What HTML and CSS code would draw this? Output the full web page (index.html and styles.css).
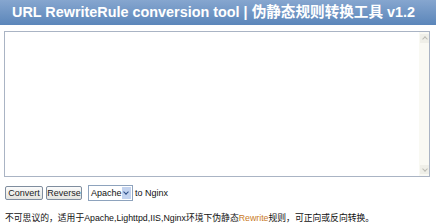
FILE: index.html
```html
<!DOCTYPE html>
<html lang="zh-CN">

<head>
    <meta charset="UTF-8">
    <title>URL RewriteRule conversion tool</title>
    <link rel="stylesheet" href="styles.css">
</head>

<body>
    <header class="top">URL RewriteRule conversion tool | <span class="cn">伪静态规则转换工具</span> v1.2</header>
    <section class="main">
        <div class="editor">
            <textarea class="code"></textarea>
            <div class="scroll">
                <span class="arrow up"></span>
                <span class="arrow down"></span>
            </div>
        </div>
        <div class="tools">
            <button class="btn convert">Convert</button>
            <button class="btn reverse">Reverse</button>
            <div class="select">
                <span class="select-text">Apache</span>
                <span class="select-btn"></span>
            </div>
            <span>to Nginx</span>
        </div>
        <p class="note">不可思议的，适用于Apache,Lighttpd,IIS,Nginx环境下伪静态<span class="hl">Rewrite</span>规则，可正向或反向转换。</p>
    </section>
</body>

</html>
```

FILE: styles.css
```css
body {
    margin: 0;
    background: #fff;
    font-family: "Liberation Sans", Arial, "Noto Sans CJK SC", sans-serif;
    color: #111;
}

.top {
    height: 25px;
    line-height: 25px;
    padding-left: 12px;
    background: linear-gradient(#86a6cf, #5b86ba);
    color: #fff;
    font-weight: bold;
    font-size: 14.4px;
    white-space: nowrap;
}

.top .cn {
    font-size: 14.6px;
}

.main {
    padding: 6px 6px 0 4px;
}

.editor {
    display: flex;
    height: 144px;
    border: 1px solid #aab4c4;
}

.code {
    flex: 1;
    border: none;
    margin: 0;
    padding: 0;
    resize: none;
    outline: none;
}

.scroll {
    width: 10px;
    background: #f9f9f3;
    display: flex;
    flex-direction: column;
    justify-content: space-between;
    align-items: center;
    padding: 2px 0;
}

.arrow {
    width: 9px;
    height: 9px;
    background: #efefe8;
    position: relative;
}

.arrow::after {
    content: "";
    position: absolute;
    left: 3px;
    width: 3px;
    height: 3px;
    border-left: 1px solid #bcbcb4;
    border-top: 1px solid #bcbcb4;
}

.up::after {
    top: 3px;
    transform: rotate(45deg);
}

.down::after {
    top: 2px;
    transform: rotate(225deg);
}

.tools {
    display: flex;
    align-items: center;
    gap: 3px;
    margin-top: 8px;
    padding-left: 1px;
    font-size: 9px;
}

.btn {
    height: 14px;
    padding: 0;
    font: 9px "Liberation Sans", Arial, sans-serif;
    color: #222;
    border: 1px solid #7f8d9e;
    border-radius: 2px;
    background: linear-gradient(#fbfbfb, #e4e4e0);
}

.convert {
    width: 38px;
}

.reverse {
    width: 36px;
}

.select {
    display: flex;
    align-items: center;
    height: 14px;
    width: 43px;
    margin-left: 3px;
    margin-right: -1px;
    border: 1px solid #8ea3bd;
    background: #fff;
}

.select-text {
    flex: 1;
    padding-left: 2px;
}

.select-btn {
    width: 9px;
    height: 12px;
    margin-right: 1px;
    background: #c3d3ef;
    position: relative;
}

.select-btn::after {
    content: "";
    position: absolute;
    left: 2px;
    top: 3px;
    width: 3px;
    height: 3px;
    border-right: 1px solid #2b4c86;
    border-bottom: 1px solid #2b4c86;
    transform: rotate(45deg);
}

.note {
    margin: 10px 0 0 1px;
    font-size: 8.8px;
    font-family: "Liberation Sans", Arial, "Noto Sans CJK SC", sans-serif;
}

.hl {
    color: #c97a26;
}
```
